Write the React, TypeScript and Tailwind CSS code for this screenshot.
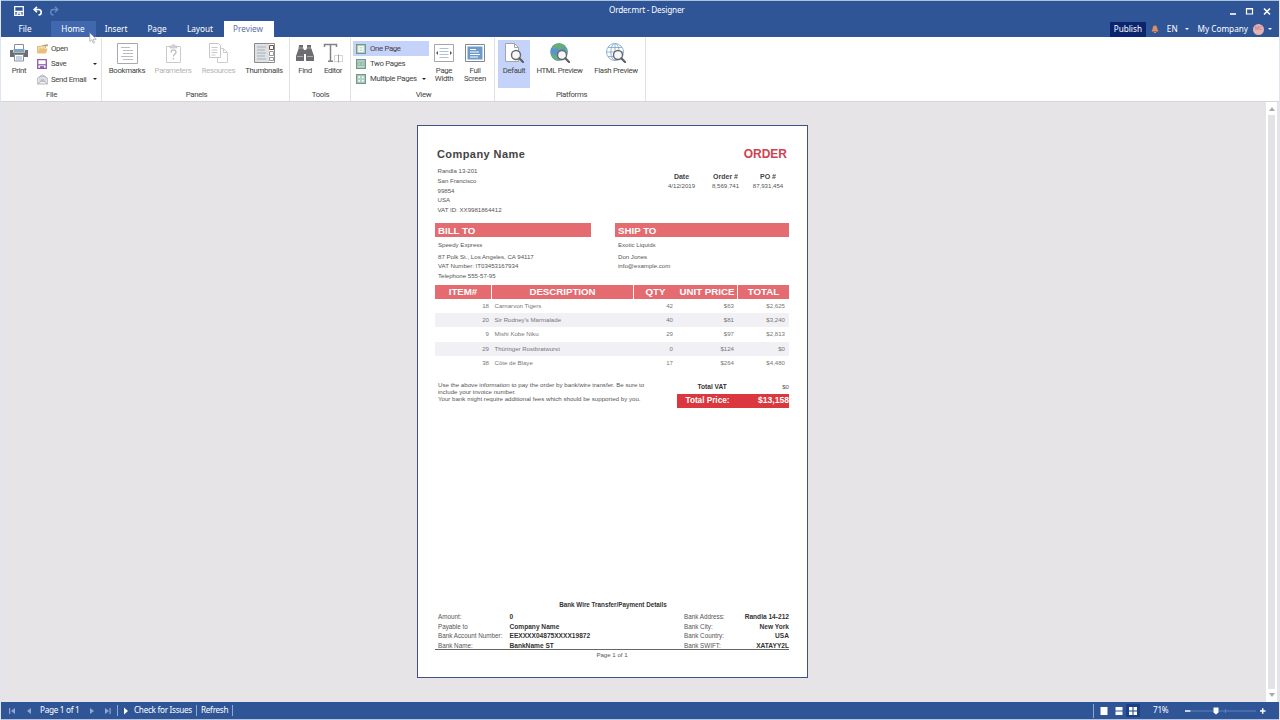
import clsx from "clsx";
import type { ReactNode } from "react";

const items = [
  { id: 18, name: "Carnarvon Tigers", qty: 42, price: "$63", total: "$2,625" },
  { id: 20, name: "Sir Rodney's Marmalade", qty: 40, price: "$81", total: "$3,240" },
  { id: 9, name: "Mishi Kobe Niku", qty: 29, price: "$97", total: "$2,813" },
  { id: 29, name: "Thüringer Rostbratwurst", qty: 0, price: "$124", total: "$0" },
  { id: 38, name: "Côte de Blaye", qty: 17, price: "$264", total: "$4,480" },
];

const bankRows = [
  ["Amount:", "0", "Bank Address:", "Randla 14-212"],
  ["Payable to", "Company Name", "Bank City:", "New York"],
  ["Bank Account Number:", "EEXXXX04875XXXX19872", "Bank Country:", "USA"],
  ["Bank Name:", "BankName ST", "Bank SWIFT:", "XATAYY2L"],
];

/* ---------- icons ---------- */

const Caret = ({ className }: { className?: string }) => (
  <svg viewBox="0 0 4 2" className={clsx("h-[2px] w-[4px] shrink-0", className)}>
    <path d="M0 0h4L2 2z" fill="currentColor" />
  </svg>
);

const PrintIcon = () => (
  <svg viewBox="0 0 20 18" className="h-[18px] w-5">
    <path d="M5.5.5h9v6h-9z" fill="#fff" stroke="#8b8f94" />
    <path d="M1 6h3v2.500h12V6h3v7H1z" fill="#6a6d72" />
    <path d="M4.500 5h11v3h-11z" fill="#7ba3cb" />
    <path d="M5.500 10.500h9v6.500h-9z" fill="#fff" stroke="#8b8f94" />
    <path d="M7 13h6M7 15h6" stroke="#86aac9" />
  </svg>
);

const OpenIcon = () => (
  <svg viewBox="0 0 11 10" className="h-[10px] w-[11px]">
    <path d="M.5 9V2.500h3l1-1h4V4" fill="#f4dca9" stroke="#cfa766" strokeWidth=".7" />
    <path d="M.5 9.500 2.500 4.500H10.500l-1.500 5z" fill="#e9be78" />
    <path d="M6 2.500C7 .8 8.500.7 10 1.200M10.300 0v2H8.400" fill="none" stroke="#9a8059" strokeWidth=".7" />
  </svg>
);

const SaveIcon = () => (
  <svg viewBox="0 0 10 10" className="h-[10px] w-[10px]">
    <path d="M.7.7h8.600v8.600H.7z" fill="#fff" stroke="#8a5cab" strokeWidth="1.300" />
    <path d="M1 5.800h8" stroke="#8a5cab" strokeWidth="1.200" />
    <path d="M3 7.200h4v2H3z" fill="#8a5cab" />
  </svg>
);

const MailIcon = () => (
  <svg viewBox="0 0 11 11" className="h-[11px] w-[11px]">
    <path d="M.7 4 5.500.8l4.800 3.200v6H.7z" fill="#f4f4f5" stroke="#a3a5a9" strokeWidth=".8" />
    <path d="M3 2.500h5v5H3z" fill="#fff" stroke="#a3a5a9" strokeWidth=".7" />
    <path d="M4 4h3M4 5.500h3" stroke="#94b1cc" strokeWidth=".7" />
    <path d="m.7 10 3.600-3.500h2.400L10.300 10" fill="none" stroke="#a3a5a9" strokeWidth=".8" />
  </svg>
);

const BookmarksIcon = () => (
  <svg viewBox="0 0 21 21" className="h-[21px] w-[21px]">
    <path d="M.5.5h20v20H.5z" fill="#fff" stroke="#a9aaac" />
    <path d="M4 4.500h9M6 7.500h10M6 10.500h10M4 13.500h12M6 16.500h10" stroke="#b9bdc3" />
  </svg>
);

const ParametersIcon = () => (
  <svg viewBox="0 0 15 20" className="h-5 w-[15px]">
    <path d="M.5 3.500h14v16H.5z" fill="#fff" stroke="#cbcbcd" />
    <path d="M4 5V3h2a1.500 1.500 0 0 1 3 0h2v2z" fill="#d5d5d7" stroke="#c2c2c4" strokeWidth=".7" />
    <path d="M5 9.500c0-3.500 5-3.500 5-.3 0 2-2.500 1.800-2.500 4.300M7.500 15v1.600" fill="none" stroke="#bcbcbf" strokeWidth="1.300" />
  </svg>
);

const ResourcesIcon = () => (
  <svg viewBox="0 0 19 20" className="h-5 w-[19px]">
    <path d="M8.500 5.500h6l4 4v10h-10z" fill="#fff" stroke="#cdcdcf" />
    <path d="M14.500 5.500v4h4" fill="none" stroke="#cdcdcf" />
    <path d="M.5.5h9l2 2v12H.5z" fill="#fff" stroke="#c6c6c8" />
    <path d="M2.500 4.500h6M2.500 7h6M2.500 9.500h6M2.500 12h4" stroke="#c9c9cc" />
  </svg>
);

const ThumbnailsIcon = () => (
  <svg viewBox="0 0 21 20" className="h-5 w-[21px]">
    <path d="M.5.5h20v19H.5z" fill="#fff" stroke="#8a8c8f" />
    <path d="M1 1h14v18H1z" fill="#dfe1e3" />
    <path d="M3 4h9M3 7h8M3 10h9M3 13h8M3 16h9" stroke="#a3b1be" strokeWidth="1.200" />
    <path d="M15.500 2.500h4v4h-4z" fill="#fff" stroke="#66533f" />
    <path d="M15.500 8.500h4v4h-4zM15.500 14.500h4v3h-4z" fill="#fff" stroke="#97999c" />
  </svg>
);

const FindIcon = () => (
  <svg viewBox="0 0 18 17" className="h-[17px] w-[18px]" fill="#6c6d70">
    <path d="M3 0h4v3l1 2v11H0v-5L2.500 4zM11 0h4v3l.5 1L18 11v5h-8V5l1-2z" />
    <path d="M7.500 5h3v4h-3z" />
    <path d="M1 11.500h6M11 11.500h6M3 3h4M11 3h4" stroke="#b9babc" strokeWidth=".8" />
  </svg>
);

const EditorIcon = () => (
  <svg viewBox="0 0 20 20" className="h-5 w-5">
    <path d="M1.500 4V1.500h12V4M7.500 1.500V18M5 18.200h5" fill="none" stroke="#808285" strokeWidth="1.500" />
    <path d="M11.500 12.500h8v6h-8z" fill="#fff" stroke="#aaacae" strokeDasharray="1 1" />
    <path d="M15.500 11.500v8" stroke="#8a8c8f" strokeWidth=".8" />
  </svg>
);

const PageIcon = ({ kind }: { kind: "one" | "two" | "many" }) => (
  <svg viewBox="0 0 10 10" className="h-[10px] w-[10px]">
    <path d="M.6.6h8.800v8.800H.6z" fill="#c4dccf" stroke="#6f9a88" strokeWidth="1.200" />
    {kind === "one" && (
      <>
        <path d="M2.500 2h5v6h-5z" fill="#fff" />
        <path d="M3.500 3.500h3M3.500 5h3M3.500 6.500h3" stroke="#9fbfb2" strokeWidth=".6" />
      </>
    )}
    {kind === "two" && <path d="M1.800 3h2.900v3.500H1.800zM5.300 3h2.900v3.500H5.300z" fill="#aed0c0" stroke="#82ad9b" strokeWidth=".6" />}
    {kind === "many" && <path d="M2 2h2.500v2.500H2zM5.500 2H8v2.500H5.500zM2 5.500h2.500V8H2zM5.500 5.500H8V8H5.500z" fill="#fff" stroke="#8fb5a4" strokeWidth=".5" />}
  </svg>
);

const PageWidthIcon = () => (
  <svg viewBox="0 0 20 18" className="h-[18px] w-5">
    <path d="M.5.5h19v17H.5z" fill="#fff" stroke="#a5a7a9" />
    <path d="M5.500 4.500h9M5.500 7.500h9M5.500 10.500h9M5.500 13.500h9" stroke="#b4c1cf" />
    <path d="M4 7 2 9l2 2zM16 7l2 2-2 2z" fill="#55575a" />
  </svg>
);

const FullScreenIcon = () => (
  <svg viewBox="0 0 20 18" className="h-[18px] w-5">
    <path d="M.5.5h19v17H.5z" fill="#fff" stroke="#858789" />
    <path d="M2.500 2.500h15v13h-15z" fill="#6a9bcb" />
    <path d="M5 5.500h6M5 8h9M5 10.500h10M5 13h8" stroke="#fff" />
  </svg>
);

const Lens = () => (
  <>
    <circle cx="12" cy="12" r="4.500" fill="#f5f7f9" stroke="#66696d" strokeWidth="1.400" />
    <path d="m15.300 15.300 3.700 3.700" stroke="#5f6165" strokeWidth="2.200" strokeLinecap="round" />
  </>
);

const DefaultIcon = () => (
  <svg viewBox="0 0 20 20" className="h-5 w-5">
    <path d="M1.500.5h9l4 4v14h-13z" fill="#fff" stroke="#a2a4a8" />
    <path d="M10.500.5v4h4" fill="none" stroke="#a2a4a8" />
    <Lens />
  </svg>
);

const HtmlIcon = () => (
  <svg viewBox="0 0 20 20" className="h-5 w-5">
    <circle cx="9" cy="9" r="8.800" fill="#5b94c9" />
    <path d="M2 3.500C5-.5 11-1 15 2.500l-2 3-4 1-2-1.500-3 1zM1 12l3-1 4 3 1 3.800C5 17.800 2 15.500 1 12z" fill="#67ad7c" />
    <path d="M15 4l2.500 4-.5 4-3 1z" fill="#67ad7c" />
    <Lens />
  </svg>
);

const FlashIcon = () => (
  <svg viewBox="0 0 20 20" className="h-5 w-5">
    <g fill="#fff" stroke="#78a2c9" strokeWidth=".8">
      <circle cx="9" cy="9" r="8.500" />
      <ellipse cx="9" cy="9" rx="4.200" ry="8.500" />
      <path d="M9 .5v17M.5 9h17M2 4.500h14M2 13.500h14" />
    </g>
    <Lens />
  </svg>
);

/* ---------- ribbon parts ---------- */

const RibbonGroup = ({ title, className, children }: { title: string; className: string; children: ReactNode }) => (
  <section className={clsx("flex h-full shrink-0 flex-col border-r border-[#e1e1e3]", className)}>
    <div className="flex h-[52px] pt-[2px]">{children}</div>
    <div className="text-center leading-[9px]">{title}</div>
  </section>
);

type BigButtonProps = {
  icon: ReactNode;
  label: ReactNode;
  className: string;
  active?: boolean;
  disabled?: boolean;
};

const BigButton = ({ icon, label, className, active, disabled }: BigButtonProps) => (
  <button
    className={clsx(
      "flex h-[48px] shrink-0 flex-col items-center pt-[2px] leading-[8px]",
      active && "bg-[#c5d2fa]",
      disabled && "text-[#b4b4b8]",
      className
    )}
  >
    <span className="flex h-[22px] items-center">{icon}</span>
    <span className="mt-[3px] whitespace-nowrap">{label}</span>
  </button>
);

type RowButtonProps = { icon: ReactNode; label: string; caret?: boolean; active?: boolean; className?: string };

const RowButton = ({ icon, label, caret, active, className }: RowButtonProps) => (
  <button className={clsx("flex h-[15.400px] w-full items-center whitespace-nowrap", active && "bg-[#c5d2fa]", className)}>
    <span className="flex w-[14px] shrink-0">{icon}</span>
    {label}
    {caret && <Caret className="ml-auto text-[#222]" />}
  </button>
);

const Ribbon = () => (
  <div className="flex h-[65px] shrink-0 border-b border-[#d5d4d7] bg-white pt-px font-[Roboto,sans-serif] text-[7.800px] tracking-[-0.340px] text-[#444]">
    <RibbonGroup title="File" className="w-[101px] pl-px">
      <BigButton className="w-[34px]" icon={<PrintIcon />} label="Print" />
      <div className="flex w-[61px] flex-col pt-px pl-px">
        <RowButton icon={<OpenIcon />} label="Open" />
        <RowButton icon={<SaveIcon />} label="Save" caret />
        <RowButton icon={<MailIcon />} label="Send Email" caret />
      </div>
    </RibbonGroup>
    <RibbonGroup title="Panels" className="w-[188px] pl-[2px]">
      <BigButton className="w-[46px]" icon={<BookmarksIcon />} label="Bookmarks" />
      <BigButton className="w-[46px]" icon={<ParametersIcon />} label="Parameters" disabled />
      <BigButton className="w-[45px]" icon={<ResourcesIcon />} label="Resources" disabled />
      <BigButton className="w-[46px]" icon={<ThumbnailsIcon />} label="Thumbnails" />
    </RibbonGroup>
    <RibbonGroup title="Tools" className="w-[61px] pl-px">
      <BigButton className="w-[28px]" icon={<FindIcon />} label="Find" />
      <BigButton className="w-[28px]" icon={<EditorIcon />} label="Editor" />
    </RibbonGroup>
    <RibbonGroup title="View" className="w-[144px] pl-[2px]">
      <div className="flex w-[76px] flex-col pt-px">
        <RowButton className="h-[15px] pl-[3px]" icon={<PageIcon kind="one" />} label="One Page" active />
        <RowButton className="pl-[3px]" icon={<PageIcon kind="two" />} label="Two Pages" />
        <RowButton className="pr-[3px] pl-[3px]" icon={<PageIcon kind="many" />} label="Multiple Pages" caret />
      </div>
      <BigButton className="w-[30px]" icon={<PageWidthIcon />} label={<>Page<br />Width</>} />
      <BigButton className="w-[32px]" icon={<FullScreenIcon />} label={<>Full<br />Screen</>} />
    </RibbonGroup>
    <RibbonGroup title="Platforms" className="w-[151px] pl-[3px]">
      <BigButton className="w-[32px]" icon={<DefaultIcon />} label="Default" active />
      <BigButton className="w-[59px]" icon={<HtmlIcon />} label="HTML Preview" />
      <BigButton className="w-[54px]" icon={<FlashIcon />} label="Flash Preview" />
    </RibbonGroup>
  </div>
);

/* ---------- header ---------- */

const Header = () => (
  <header className="relative h-[37px] shrink-0 border-t border-[#a9c3dc] bg-[#2f5597] text-[8.200px] text-white">
    <div className="flex h-[19px] items-center pr-[6px] pl-[13px]">
      <svg viewBox="0 0 10 10" className="h-[10px] w-[10px]">
        <path d="M.7.7h8.600v8.600H.7zM1 5.300h8M3.300 9V7h3.500v2" fill="none" stroke="#fff" strokeWidth="1.300" />
      </svg>
      <svg viewBox="0 0 10 10" className="ml-[9px] h-[10px] w-[10px]">
        <path d="M4 .8 1.200 3.500 4 6.200M1.500 3.500h4a2.700 2.700 0 0 1 0 5.500" fill="none" stroke="#fff" strokeWidth="1.600" />
      </svg>
      <svg viewBox="0 0 10 10" className="ml-[6px] h-[10px] w-[10px]">
        <path d="M6 .8 8.800 3.500 6 6.200M8.500 3.500h-4a2.700 2.700 0 0 0 0 5.500" fill="none" stroke="#6c8bc0" strokeWidth="1.300" />
      </svg>
      <div className="ml-[550px] pb-px tracking-[-0.180px]">Order.mrt - Designer</div>
      <svg viewBox="0 0 44 10" className="ml-auto h-[10px] w-[44px]" fill="none" stroke="#fff">
        <path d="M1 8h6" strokeWidth="1.600" />
        <path d="M17.500 2.500h6v5.500h-6zM17.500 3h6" strokeWidth="1.200" />
        <path d="m35 2.500 6 6M41 2.500l-6 6" strokeWidth="1.600" />
      </svg>
    </div>
    <div className="flex h-[17px] items-center pr-[7px]">
      <nav className="flex h-full pt-px">
        <a className="flex w-[50px] items-center justify-center pr-[2px]">File</a>
        <a className="flex w-[45px] items-center justify-center bg-[#4168ae] pr-px">Home</a>
        <a className="flex w-[40px] items-center justify-center">Insert</a>
        <a className="flex w-[42px] items-center justify-center">Page</a>
        <a className="flex w-[46px] items-center justify-center pr-[2px]">Layout</a>
        <a className="flex w-[50px] items-center justify-center bg-white pr-[2px] text-[#5b72a8]">Preview</a>
      </nav>
      <div className="ml-auto flex h-full items-center pt-px">
        <div className="mt-px flex h-[15px] w-[36px] items-center justify-center bg-[#0b2470]">Publish</div>
        <svg viewBox="0 0 8 8" className="ml-[5px] h-2 w-2" fill="#df8c61">
          <path d="M4 .5C2 .5 1.700 2.500 1.500 4.500L.5 6.500h7l-1-2C6.300 2.500 6 .5 4 .5zM3 7h2v1H3z" />
        </svg>
        <span className="ml-[8px]">EN</span>
        <Caret className="ml-[7px]" />
        <span className="ml-[9px]">My Company</span>
        <span className="ml-[5px] flex h-[11px] w-[11px] items-center justify-center rounded-full bg-[#e5b3b3] text-[5px] text-[#b9747b]">MC</span>
        <Caret className="ml-[4px]" />
      </div>
    </div>
    {/* mouse pointer over the Home tab */}
    <svg viewBox="0 0 8 12" className="absolute top-[31px] left-[88px] z-10 h-[12px] w-[8px]">
      <path d="M.8.8v8.700l2-1.800 1.500 3.500 1.400-.6-1.500-3.300h3z" fill="#fff" stroke="#8b8d9c" strokeWidth=".6" />
    </svg>
  </header>
);

/* ---------- report ---------- */

const Band = ({ children }: { children: ReactNode }) => (
  <div className="h-[14px] w-full bg-[#e46b70] pl-[3px] text-[9.700px] leading-[15px] font-bold text-white">{children}</div>
);

const ReportPage = () => (
  <article className="flex h-[553px] w-[391px] flex-col border border-[#3f5186] bg-white pr-[18px] pl-[17px] font-['Liberation_Sans',Arial,sans-serif] text-[6.100px] text-[#555]">
    <div className="flex h-[97px] justify-between pt-[22px] pl-[2px]">
      <div>
        <h1 className="text-[11px] leading-[13px] font-bold tracking-[0.420px] text-[#444]">Company Name</h1>
        <p className="mt-[5px] pl-[0.500px] leading-[9px]">Randla 13-201</p>
        <p className="mt-[1px] pl-[0.500px] leading-[9.600px]">
          San Francisco
          <br />
          99854
          <br />
          USA
          <br />
          VAT ID: XX9981864412
        </p>
      </div>
      <div className="flex flex-col items-end">
        <h2 className="pr-[2px] text-[12px] leading-[13px] font-bold text-[#cf4250]">ORDER</h2>
        <div className="mt-[11px] grid grid-cols-[45px_43px_42px] text-center leading-[9px]">
          <b className="text-[7px] text-[#444]">Date</b>
          <b className="text-[7px] text-[#444]">Order #</b>
          <b className="text-[7px] text-[#444]">PO #</b>
          <span>4/12/2019</span>
          <span>8,569,741</span>
          <span>87,931,454</span>
        </div>
      </div>
    </div>

    <div className="flex h-[62px] shrink-0 justify-between">
      <div className="w-[156px]">
        <Band>BILL TO</Band>
        <div className="pl-[3px]">
          <p className="mt-[3px] leading-[9px]">Speedy Express</p>
          <p className="mt-[2.500px] leading-[9.500px]">
            87 Polk St., Los Angeles, CA 94117
            <br />
            VAT Number: IT03453167934
            <br />
            Telephone 555-57-95
          </p>
        </div>
      </div>
      <div className="w-[174px]">
        <Band>SHIP TO</Band>
        <div className="pl-[3px]">
          <p className="mt-[3px] leading-[9px]">Exotic Liquids</p>
          <p className="mt-[2.500px] leading-[9.500px]">
            Don Jones
            <br />
            info@example.com
          </p>
        </div>
      </div>
    </div>

    <div className="grid h-[14px] shrink-0 grid-cols-[57px_142px_43px_61px_51px] text-center text-[9.700px] leading-[14px] font-bold text-white [&>*]:bg-[#e46b70]">
      <div className="border-r border-white">ITEM#</div>
      <div className="border-r border-white">DESCRIPTION</div>
      <div>QTY</div>
      <div className="border-r border-white">UNIT PRICE</div>
      <div>TOTAL</div>
    </div>
    {items.map((item, i) => (
      <div
        key={item.id}
        className={clsx(
          "grid h-[14.200px] shrink-0 grid-cols-[54px_142px_42px_61px_51px] text-right leading-[14.800px] text-[#777]",
          i % 2 === 1 && "bg-[#f1f0f5]"
        )}
      >
        <span>{item.id}</span>
        <span className="pl-[5.500px] text-left">{item.name}</span>
        <span>{item.qty}</span>
        <span>{item.price}</span>
        <span>{item.total}</span>
      </div>
    ))}

    <div className="mt-[10px] flex h-[29px] shrink-0 justify-between">
      <p className="w-[220px] pt-[1px] pl-[3px] text-[6.150px] leading-[7px] whitespace-nowrap">
        Use the above information to pay the order by bank/wire transfer. Be sure to
        <br />
        include your invoice number.
        <br />
        Your bank might require additional fees which should be supported by you.
      </p>
      <div className="w-[112.500px]">
        <div className="flex h-[14px] items-center justify-between pl-[21px]">
          <b className="text-[6.600px] text-[#333]">Total VAT</b>
          <span>$0</span>
        </div>
        <div className="flex h-[14px] items-center justify-between bg-[#da373f] pl-[9px] text-[8.200px] font-bold text-white">
          <span>Total Price:</span>
          <span className="text-[8.600px]">$13,158</span>
        </div>
      </div>
    </div>

    <footer className="mt-auto mb-[17px] shrink-0">
      <div className="pb-[2px] pl-[2px] text-center text-[6.300px] leading-[9px] font-bold text-[#333]">
        Bank Wire Transfer/Payment Details
      </div>
      <div className="border-b border-[#666]">
        {bankRows.map(([label, value, bankLabel, bankValue]) => (
          <div key={label} className="grid h-[9.400px] grid-cols-[71.500px_174.500px_1fr_auto] pl-[3px] text-[6.300px] leading-[11px]">
            <span>{label}</span>
            <b className="text-[6.600px] text-[#333]">{value}</b>
            <span>{bankLabel}</span>
            <b className="text-[6.600px] text-[#333]">{bankValue}</b>
          </div>
        ))}
      </div>
      <div className="text-center text-[6.100px] leading-[10px]">Page 1 of 1</div>
    </footer>
  </article>
);

/* ---------- status bar ---------- */

const StatusBar = () => (
  <footer className="flex h-[18px] shrink-0 items-center border-b border-[#b5c3de] bg-[#2f5597] text-[8.200px] tracking-[-0.300px] text-white">
    <svg viewBox="0 0 24 8" className="ml-[8px] h-2 w-6" fill="#8fa7d3">
      <path d="M0 1h1.200v6H0zM6 1v6L2 4zM22 1v6l-4-3z" />
    </svg>
    <span className="ml-[7px] w-[40px] whitespace-nowrap">Page 1 of 1</span>
    <svg viewBox="0 0 24 8" className="ml-[8px] h-2 w-6" fill="#8fa7d3">
      <path d="M2 1v6l4-3zM17 1v6l4-3zM21.500 1h1.200v6h-1.200z" />
    </svg>
    <span className="ml-[5px] h-[11px] w-px bg-[#8fa7d3]" />
    <svg viewBox="0 0 5 8" className="ml-[6px] h-2 w-[5px]">
      <path d="M0 .5v7L4 4z" fill="#fff" />
    </svg>
    <span className="ml-[5px] w-[57px] whitespace-nowrap">Check for Issues</span>
    <span className="ml-[5px] h-[11px] w-px bg-[#8fa7d3]" />
    <span className="ml-[4px] w-[27px]">Refresh</span>
    <span className="ml-[4px] h-[11px] w-px bg-[#8fa7d3]" />

    <div className="ml-auto flex h-full items-center pr-[12px]">
      <span className="h-[14px] w-px bg-[#8fa7d3]" />
      <svg viewBox="0 0 8 8" className="ml-[6px] h-2 w-2">
        <path d="M.5 0h7v8h-7z" fill="#fff" />
      </svg>
      <svg viewBox="0 0 8 8" className="ml-[7px] h-2 w-2">
        <path d="M.5 0h7v3.500h-7zM.5 4.500h7V8h-7z" fill="#fff" />
      </svg>
      <span className="ml-[3px] flex h-[13px] w-[14px] items-center justify-center bg-[#1d3f86]">
        <svg viewBox="0 0 8 8" className="h-2 w-2">
          <path d="M0 0h3.500v3.500H0zM4.500 0H8v3.500H4.500zM0 4.500h3.500V8H0zM4.500 4.500H8V8H4.500z" fill="#fff" />
        </svg>
      </span>
      <span className="ml-[13px] w-[15px]">71%</span>
      <svg viewBox="0 0 84 10" className="ml-[15px] h-[10px] w-[84px]">
        <path d="M8 5h65M42.500 3v4" stroke="#5f82bd" />
        <path d="M2 5h5.500M77 5h5.500M79.700 2.300v5.400" stroke="#fff" strokeWidth="1.500" />
        <path d="M30.500 1.500h5V6.500l-2.500 2-2.500-2z" fill="#fff" />
      </svg>
    </div>
  </footer>
);

const App = () => (
  <div className="flex h-[720px] w-[1280px] flex-col overflow-hidden border-x border-[#dfe5f0] bg-white font-['Noto_Sans',sans-serif]">
    <Header />
    <Ribbon />
    <main className="flex min-h-0 flex-1 bg-[#e6e4e7]">
      <div className="flex-1 pt-[23px] pl-[416px]">
        <ReportPage />
      </div>
      <div className="mr-[2px] flex w-[11px] flex-col items-center justify-between bg-white py-[5px] text-[#aaa]">
        <svg viewBox="0 0 6 4" className="h-1 w-[6px]">
          <path d="M0 4h6L3 0z" fill="currentColor" />
        </svg>
        <div className="my-[4px] w-[7px] flex-1 bg-[#e3e2e5]" />
        <svg viewBox="0 0 6 4" className="h-1 w-[6px]">
          <path d="M0 0h6L3 4z" fill="currentColor" />
        </svg>
      </div>
    </main>
    <StatusBar />
  </div>
);

export default App;
